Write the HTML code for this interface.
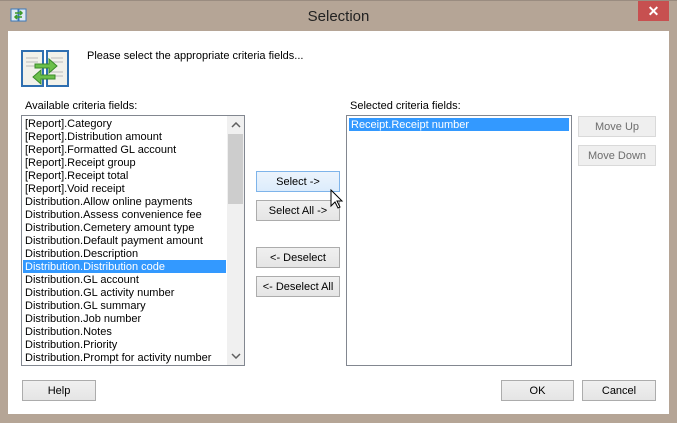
<!DOCTYPE html>
<html><head><style>
*{margin:0;padding:0;box-sizing:border-box}
body{width:677px;height:423px;background:#b5a596;position:relative;overflow:hidden;font-family:"Liberation Sans",sans-serif;font-size:11px;color:#000}
.a{position:absolute}
.btn{position:absolute;background:linear-gradient(#f0f0f0,#e5e5e5);border:1px solid #acacac;text-align:center;line-height:20px;font-size:11px}
.row{height:13px;line-height:14px;padding-left:2px;white-space:nowrap}
</style></head><body>
<div class="a" style="left:0;top:0;width:677px;height:1px;background:#9a8c80"></div>
<div class="a" style="left:638px;top:1px;width:31px;height:20px;background:#c75050;color:#fff;text-align:center;line-height:20px;font-size:14px;font-weight:bold">✕</div>
<svg class="a" style="left:10px;top:7px" width="18" height="16"><rect x="1" y="2" width="7" height="12" fill="#dfe9f4" stroke="#3a78b8"/><rect x="9" y="2" width="7" height="12" fill="#dfe9f4" stroke="#3a78b8"/><path d="M5 6h7M10 4l2 2-2 2M12 10H5M7 8l-2 2 2 2" stroke="#3a9a2a" stroke-width="1.5" fill="none"/></svg>
<div class="a" style="left:0;top:8px;width:677px;text-align:center;font-size:15px;color:#222">Selection</div>
<div class="a" style="left:8px;top:31px;width:661px;height:383px;background:#fff"></div>
<svg class="a" style="left:21px;top:50px" width="48" height="37">
<rect x="1" y="1" width="21" height="35" fill="#f1f1ea" stroke="#2f6fb0" stroke-width="2"/>
<rect x="26" y="1" width="21" height="35" fill="#f1f1ea" stroke="#2f6fb0" stroke-width="2"/>
<path d="M5 8h12M5 12h12M5 16h10M30 8h12M30 12h12M30 22h12M30 26h12" stroke="#bbb"/>
<path d="M14 14h14v-5l8 7-8 7v-5H14z" fill="#6cc04a" stroke="#3a8a2a"/>
<path d="M34 25H20v-5l-8 7 8 7v-5h14z" fill="#6cc04a" stroke="#3a8a2a"/>
</svg>
<div class="a" style="left:87px;top:50px">Please select the appropriate criteria fields...</div>
<div class="a" style="left:25px;top:100px">Available criteria fields:</div>
<div class="a" style="left:350px;top:100px">Selected criteria fields:</div>
<div class="a" style="left:21px;top:115px;width:224px;height:251px;border:1px solid #828790;background:#fff;overflow:hidden">
<div style="padding:1px 0 0 1px;width:204px">
<div class="row">[Report].Category</div><div class="row">[Report].Distribution amount</div><div class="row">[Report].Formatted GL account</div><div class="row">[Report].Receipt group</div><div class="row">[Report].Receipt total</div><div class="row">[Report].Void receipt</div><div class="row">Distribution.Allow online payments</div><div class="row">Distribution.Assess convenience fee</div><div class="row">Distribution.Cemetery amount type</div><div class="row">Distribution.Default payment amount</div><div class="row">Distribution.Description</div><div class="row" style="background:#3399ff;color:#fff">Distribution.Distribution code</div><div class="row">Distribution.GL account</div><div class="row">Distribution.GL activity number</div><div class="row">Distribution.GL summary</div><div class="row">Distribution.Job number</div><div class="row">Distribution.Notes</div><div class="row">Distribution.Priority</div><div class="row">Distribution.Prompt for activity number</div>
</div>
<div class="a" style="left:205px;top:0;width:17px;height:249px;background:#f0f0f0"></div>
<div class="a" style="left:206px;top:18px;width:15px;height:70px;background:#cdcdcd"></div>
<svg class="a" style="left:209px;top:6px" width="10" height="6"><path d="M1 5l4-4 4 4" stroke="#606060" stroke-width="1.5" fill="none"/></svg>
<svg class="a" style="left:209px;top:237px" width="10" height="6"><path d="M1 1l4 4 4-4" stroke="#606060" stroke-width="1.5" fill="none"/></svg>
</div>
<div class="a" style="left:346px;top:115px;width:226px;height:251px;border:1px solid #828790;background:#fff">
<div class="row" style="margin:2px 1px 0 2px;background:#3399ff;color:#fff;width:220px">Receipt.Receipt number</div>
</div>
<div class="btn" style="left:256px;top:171px;width:84px;height:21px;background:linear-gradient(#ecf4fc,#dcecfc);border-color:#7eb4ea">Select -&gt;</div>
<div class="btn" style="left:256px;top:200px;width:84px;height:21px">Select All -&gt;</div>
<div class="btn" style="left:256px;top:247px;width:84px;height:21px">&lt;- Deselect</div>
<div class="btn" style="left:256px;top:276px;width:84px;height:21px">&lt;- Deselect All</div>
<div class="btn" style="left:578px;top:116px;width:78px;height:21px;color:#6d6d6d;background:#efefef;border-color:#d9d9d9">Move Up</div>
<div class="btn" style="left:578px;top:145px;width:78px;height:21px;color:#6d6d6d;background:#efefef;border-color:#d9d9d9">Move Down</div>
<div class="btn" style="left:22px;top:380px;width:74px;height:21px">Help</div>
<div class="btn" style="left:501px;top:380px;width:73px;height:21px">OK</div>
<div class="btn" style="left:582px;top:380px;width:74px;height:21px">Cancel</div>
<svg class="a" style="left:330px;top:189px" width="14" height="22"><path d="M1 1v16l4-4 3 6 2-1-3-6h5z" fill="#fff" stroke="#000"/></svg>
</body></html>
